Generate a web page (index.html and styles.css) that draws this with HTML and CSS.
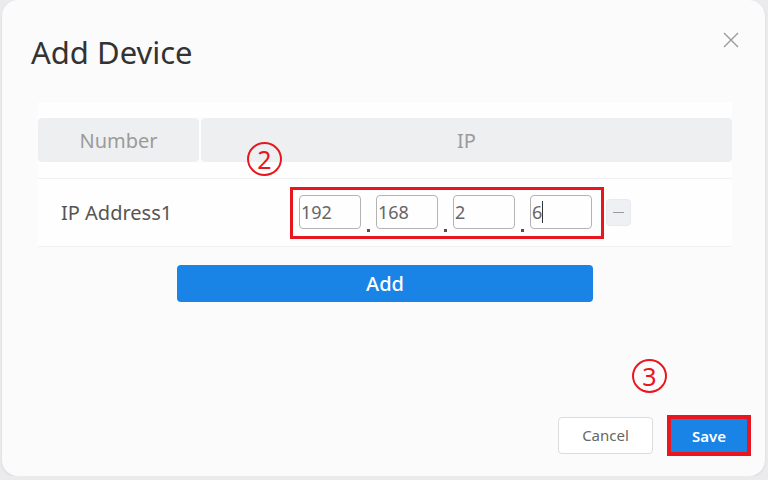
FILE: index.html
```html
<!DOCTYPE html>
<html lang="en">
    <head>
        <meta charset="UTF-8" />
        <title>Add Device</title>
        <link rel="stylesheet" href="styles.css">
    </head>
    <body>
        <div class="dialog">
            <div class="dialog-head">
                <h1>Add Device</h1>
                <button class="close" aria-label="Close">
                    <svg width="16" height="16" viewBox="0 0 16 16">
                        <path d="M1 1 L15 15 M15 1 L1 15" stroke="#9a9a9a" stroke-width="1.4" fill="none" />
                    </svg>
                </button>
            </div>

            <div class="table">
                <div class="table-head">
                    <div class="th">Number</div>
                    <div class="th">IP</div>
                </div>
                <div class="table-row">
                    <div class="td-name">IP Address1</div>
                    <div class="td-ip">
                        <div class="ip-box">
                            <div class="octet">192</div>
                            <span class="dot"></span>
                            <div class="octet">168</div>
                            <span class="dot"></span>
                            <div class="octet">2</div>
                            <span class="dot"></span>
                            <div class="octet">6<span class="caret"></span></div>
                        </div>
                        <button class="minus" aria-label="Remove"><span></span></button>
                    </div>
                </div>
            </div>

            <div class="add-wrap">
                <button class="btn-add">Add</button>
            </div>

            <div class="dialog-foot">
                <button class="btn-cancel">Cancel</button>
                <div class="save-box">
                    <button class="btn-save">Save</button>
                </div>
            </div>

            <!-- step markers -->
            <span class="step step-2">2</span>
            <span class="step step-3">3</span>
        </div>
    </body>
</html>
```

FILE: styles.css
```css
* {
  box-sizing: border-box;
}
body {
  margin: 0;
  background: #ebebed;
  font-family: 'Noto Sans', 'Open Sans', sans-serif;
  color: #333;
}
button {
  font-family: inherit;
  cursor: pointer;
}
.dialog {
  position: relative;
  margin-left: 2px;
  width: 763px;
  height: 476px;
  background: #fbfbfc;
  border-radius: 16px;
  box-shadow: 0 1px 3px rgba(0, 0, 0, 0.08);
  display: flex;
  flex-direction: column;
}
.dialog-head {
  display: flex;
  justify-content: space-between;
  align-items: flex-start;
  padding: 32px 26px 0 29px;
}
.dialog-head h1 {
  margin: 0;
  font-size: 31px;
  font-weight: 400;
  line-height: 40px;
  color: #333;
}
.close {
  border: none;
  background: none;
  padding: 0;
  width: 16px;
  height: 16px;
}
.close svg {
  display: block;
}

/* table */
.table {
  margin: 30px 33px 0 36px;
  padding-top: 16px;
  background: #fefefe;
}
.table-head {
  display: grid;
  grid-template-columns: 161px 1fr;
  gap: 2px;
  height: 44px;
}
.th {
  background: #eeeff1;
  border-radius: 4px;
  display: flex;
  align-items: center;
  justify-content: center;
  font-size: 20px;
  color: #9b9b9b;
}
.table-row {
  margin-top: 16px;
  height: 69px;
  border-top: 1px solid #f0f1f3;
  border-bottom: 1px solid #f0f1f3;
  display: grid;
  grid-template-columns: 163px 1fr;
  align-items: center;
}
.td-name {
  padding-left: 23px;
  font-size: 20px;
  color: #555;
}
.td-ip {
  display: flex;
  align-items: center;
  padding-left: 89px;
}
.ip-box {
  display: flex;
  align-items: stretch;
  height: 52px;
  padding: 5px 9px 7px 6px;
  border: 3px solid #e8161e;
}
.octet {
  width: 62px;
  height: 34px;
  border: 1px solid #b3b3b3;
  border-radius: 4px;
  padding-left: 1px;
  font-size: 18px;
  line-height: 32px;
  color: #666;
  display: flex;
  align-items: center;
}
.caret {
  display: inline-block;
  width: 1px;
  height: 22px;
  background: #333;
}
.dot {
  width: 15px;
  display: flex;
  align-items: flex-end;
  justify-content: center;
}
.dot::after {
  content: '';
  width: 3px;
  height: 3px;
  background: #555;
  margin-bottom: -3px;
}
.minus {
  margin-left: 2px;
  width: 25px;
  height: 27px;
  padding: 0;
  background: #eef0f3;
  border: 1px solid #e8eaed;
  border-radius: 4px;
  display: flex;
  align-items: center;
  justify-content: center;
}
.minus span {
  width: 11px;
  height: 1px;
  background: #9a9a9a;
}

/* add button */
.add-wrap {
  margin: 18px 33px 0 36px;
  display: flex;
  justify-content: center;
}
.btn-add {
  width: 416px;
  height: 37px;
  border: none;
  border-radius: 4px;
  background: #1a83e6;
  color: #fff;
  font-size: 20px;
  font-weight: 500;
}

/* footer */
.dialog-foot {
  margin-top: auto;
  display: flex;
  justify-content: flex-end;
  align-items: center;
  padding: 0 14px 20px 0;
}
.btn-cancel {
  width: 95px;
  height: 37px;
  margin-right: 14px;
  margin-top: -1px;
  background: #fff;
  border: 1px solid #dcdcdc;
  border-radius: 4px;
  color: #666;
  font-size: 15px;
}
.save-box {
  border: 4px solid #e8161e;
}
.btn-save {
  display: block;
  width: 76px;
  height: 33px;
  border: none;
  background: #1a83e6;
  color: #fff;
  font-size: 15px;
  font-weight: 600;
}

/* annotation markers */
.step {
  position: absolute;
  width: 35px;
  height: 34px;
  border: 2px solid #e8161e;
  border-radius: 50%;
  color: #e8161e;
  font-size: 25px;
  line-height: 30px;
  text-align: center;
}
.step-2 {
  left: 245px;
  top: 142px;
}
.step-3 {
  left: 630px;
  top: 359px;
}
```
